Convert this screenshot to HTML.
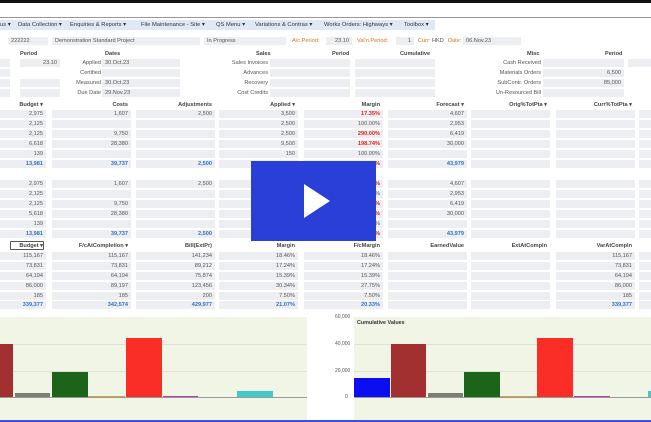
<!DOCTYPE html>
<html><head><meta charset="utf-8"><style>
*{margin:0;padding:0;box-sizing:border-box}
body{width:651px;height:422px;overflow:hidden;background:#fff;font-family:"Liberation Sans",sans-serif;font-size:5.6px;color:#555;position:relative}
.a{position:absolute;white-space:nowrap}
.b{position:absolute;background:#eceef1;height:8px;line-height:8px;padding:0 3px;white-space:nowrap}
.r{position:absolute;left:0;width:651px;height:8px}
.r>div{position:absolute;top:0;height:8px;line-height:8px;background:#eceef1;width:79px;text-align:right;padding-right:3px}
.r>div:nth-child(1){left:-33px}.r>div:nth-child(2){left:52px}.r>div:nth-child(3){left:136px}.r>div:nth-child(4){left:219px}.r>div:nth-child(5){left:304px}.r>div:nth-child(6){left:388px}.r>div:nth-child(7){left:471px}.r>div:nth-child(8){left:556px}.r>div:nth-child(9){left:639px}
.h>div{background:none;font-weight:bold;color:#444}
.t>div{color:#2f6fd0;font-weight:bold}
.red{color:#e02020!important;font-weight:bold}
.o{color:#e07020}
.nav{position:absolute;left:0;top:20px;width:435px;height:10px;background:#dfe9f5;line-height:10px;color:#333;font-size:5.8px}
.nav span{position:absolute}
.g{position:absolute;height:1px;background:#dfe3d6}
</style></head><body>
<div class="a" style="left:0;top:0;width:651px;height:3px;background:#111"></div>
<div class="a" style="left:0;top:17px;width:651px;height:1px;background:#999"></div>
<div class="nav"><span style="left:0">us ▾</span><span style="left:18px">Data Collection ▾</span><span style="left:70px">Enquiries &amp; Reports ▾</span><span style="left:141px">File Maintenance - Site ▾</span><span style="left:216px">QS Menu ▾</span><span style="left:255px">Variations &amp; Contras ▾</span><span style="left:324px">Works Orders: Highways ▾</span><span style="left:404px">Toolbox ▾</span></div>

<div class="b" style="left:8px;top:37px;width:40px">222222</div>
<div class="b" style="left:52px;top:37px;width:148px">Demonstration Standard Project</div>
<div class="b" style="left:204px;top:37px;width:82px">In Progress</div>
<div class="a o" style="left:292px;top:37px;line-height:8px">A/c.Period:</div>
<div class="b" style="left:326px;top:37px;width:26px;text-align:right">23.10</div>
<div class="a o" style="left:357px;top:37px;line-height:8px">Val'n.Period:</div>
<div class="b" style="left:396px;top:37px;width:18px;text-align:right">1</div>
<div class="a o" style="left:418px;top:37px;line-height:8px">Curr:</div>
<div class="a" style="left:432px;top:37px;line-height:8px">HKD</div>
<div class="a o" style="left:448px;top:37px;line-height:8px">Date:</div>
<div class="b" style="left:463px;top:37px;width:58px">06.Nov.23</div>

<div class="a" style="left:20px;top:51px;font-weight:bold;color:#444">Period</div>
<div class="a" style="left:105px;top:51px;font-weight:bold;color:#444">Dates</div>
<div class="a" style="left:256px;top:51px;font-weight:bold;color:#444">Sales</div>
<div class="a" style="left:332px;top:51px;font-weight:bold;color:#444">Period</div>
<div class="a" style="left:400px;top:51px;font-weight:bold;color:#444">Cumulative</div>
<div class="a" style="left:527px;top:51px;font-weight:bold;color:#444">Misc</div>
<div class="a" style="left:605px;top:51px;font-weight:bold;color:#444">Period</div>

<div class="b" style="left:0;top:59px;width:10px"></div><div class="b" style="left:0;top:69px;width:10px"></div><div class="b" style="left:0;top:79px;width:10px"></div><div class="b" style="left:0;top:89px;width:10px"></div>
<div class="b" style="left:20px;top:59px;width:40px;text-align:right">23.10</div>
<div class="b" style="left:20px;top:79px;width:40px"></div><div class="b" style="left:20px;top:89px;width:40px"></div>
<div class="a" style="left:60px;top:59px;width:41px;text-align:right;line-height:8px">Applied</div>
<div class="a" style="left:60px;top:69px;width:41px;text-align:right;line-height:8px">Certified</div>
<div class="a" style="left:60px;top:79px;width:41px;text-align:right;line-height:8px">Measured</div>
<div class="a" style="left:60px;top:89px;width:41px;text-align:right;line-height:8px">Due Date</div>
<div class="b" style="left:102px;top:59px;width:78px">30.Oct.23</div><div class="b" style="left:102px;top:69px;width:78px"></div><div class="b" style="left:102px;top:79px;width:78px">30.Oct.23</div><div class="b" style="left:102px;top:89px;width:78px">29.Nov.23</div>
<div class="a" style="left:200px;top:59px;width:68px;text-align:right;line-height:8px">Sales Invoices</div>
<div class="a" style="left:200px;top:69px;width:68px;text-align:right;line-height:8px">Advances</div>
<div class="a" style="left:200px;top:79px;width:68px;text-align:right;line-height:8px">Recovery</div>
<div class="a" style="left:200px;top:89px;width:68px;text-align:right;line-height:8px">Cost Credits</div>
<div class="b" style="left:270px;top:59px;width:80px"></div><div class="b" style="left:270px;top:69px;width:80px"></div><div class="b" style="left:270px;top:79px;width:80px"></div><div class="b" style="left:270px;top:89px;width:80px"></div>
<div class="b" style="left:355px;top:59px;width:80px"></div><div class="b" style="left:355px;top:69px;width:80px"></div><div class="b" style="left:355px;top:79px;width:80px"></div><div class="b" style="left:355px;top:89px;width:80px"></div>
<div class="a" style="left:470px;top:59px;width:71px;text-align:right;line-height:8px">Cash Received</div>
<div class="a" style="left:470px;top:69px;width:71px;text-align:right;line-height:8px">Materials Orders</div>
<div class="a" style="left:470px;top:79px;width:71px;text-align:right;line-height:8px">SubContr. Orders</div>
<div class="a" style="left:470px;top:89px;width:71px;text-align:right;line-height:8px">Un-Resourced Bill</div>
<div class="b" style="left:543px;top:59px;width:81px"></div><div class="b" style="left:543px;top:69px;width:81px;text-align:right">6,500</div><div class="b" style="left:543px;top:79px;width:81px;text-align:right">85,000</div><div class="b" style="left:543px;top:89px;width:81px"></div>
<div class="b" style="left:628px;top:59px;width:30px"></div>

<div class="r h" style="top:101px"><div>Budget ▾</div><div>Costs</div><div>Adjustments</div><div>Applied ▾</div><div>Margin</div><div>Forecast ▾</div><div>Orig%TotPta ▾</div><div>Curr%TotPta ▾</div></div>
<div class="r" style="top:110px"><div>2,975</div><div>1,607</div><div>2,500</div><div>3,500</div><div class="red">17.35%</div><div>4,607</div><div></div><div></div><div></div></div>
<div class="r" style="top:120px"><div>2,125</div><div></div><div></div><div>2,500</div><div>100.00%</div><div>2,953</div><div></div><div></div><div></div></div>
<div class="r" style="top:130px"><div>2,125</div><div>9,750</div><div></div><div>2,500</div><div class="red">290.00%</div><div>6,419</div><div></div><div></div><div></div></div>
<div class="r" style="top:140px"><div>6,618</div><div>28,380</div><div></div><div>9,500</div><div class="red">198.74%</div><div>30,000</div><div></div><div></div><div></div></div>
<div class="r" style="top:150px"><div>139</div><div></div><div></div><div>150</div><div>100.00%</div><div></div><div></div><div></div><div></div></div>
<div class="r t" style="top:160px"><div>13,981</div><div>39,737</div><div>2,500</div><div></div><div class="red">%</div><div>43,979</div><div></div><div></div><div></div></div>

<div class="r" style="top:180px"><div>2,975</div><div>1,607</div><div>2,500</div><div></div><div class="red">%</div><div>4,607</div><div></div><div></div><div></div></div>
<div class="r" style="top:190px"><div>2,125</div><div></div><div></div><div></div><div>%</div><div>2,953</div><div></div><div></div><div></div></div>
<div class="r" style="top:200px"><div>2,125</div><div>9,750</div><div></div><div></div><div class="red">%</div><div>6,419</div><div></div><div></div><div></div></div>
<div class="r" style="top:210px"><div>5,618</div><div>28,380</div><div></div><div></div><div class="red">%</div><div>30,000</div><div></div><div></div><div></div></div>
<div class="r" style="top:220px"><div>139</div><div></div><div></div><div></div><div>%</div><div></div><div></div><div></div><div></div></div>
<div class="r t" style="top:230px"><div>13,981</div><div>39,737</div><div>2,500</div><div></div><div class="red">%</div><div>43,979</div><div></div><div></div><div></div></div>

<div class="a" style="left:10px;top:241px;width:34px;height:9px;border:1px solid #555;border-radius:1px"></div>
<div class="r h" style="top:242px"><div>Budget ▾</div><div>F/cAtCompletion ▾</div><div>Bill(ExtPr)</div><div>Margin</div><div>F/cMargin</div><div>EarnedValue</div><div>ExtAtCompln</div><div>VarAtCompln</div></div>
<div class="r" style="top:252px"><div>115,167</div><div>115,167</div><div>141,234</div><div>18.46%</div><div>18.46%</div><div></div><div></div><div>115,167</div><div></div></div>
<div class="r" style="top:262px"><div>73,831</div><div>73,831</div><div>89,212</div><div>17.24%</div><div>17.24%</div><div></div><div></div><div>73,831</div><div></div></div>
<div class="r" style="top:272px"><div>64,194</div><div>64,194</div><div>75,874</div><div>15.39%</div><div>15.39%</div><div></div><div></div><div>64,194</div><div></div></div>
<div class="r" style="top:282px"><div>86,000</div><div>89,197</div><div>123,456</div><div>30.34%</div><div>27.75%</div><div></div><div></div><div>86,000</div><div></div></div>
<div class="r" style="top:292px"><div>185</div><div>185</div><div>200</div><div>7.50%</div><div>7.50%</div><div></div><div></div><div>185</div><div></div></div>
<div class="r t" style="top:301px"><div>339,377</div><div>342,574</div><div>429,977</div><div>21.07%</div><div>20.33%</div><div></div><div></div><div>339,377</div><div></div></div>

<div class="a" style="left:251px;top:161px;width:125px;height:80px;background:#2a3fd8"></div>
<div class="a" style="left:304px;top:184px;width:0;height:0;border-top:17px solid transparent;border-bottom:17px solid transparent;border-left:26px solid #fff"></div>

<div class="a" style="left:0;top:317px;width:307px;height:103px;background:#f1f5e6"></div>
<div class="g" style="left:0;top:344px;width:307px"></div><div class="g" style="left:0;top:371px;width:307px"></div>
<div class="a" style="left:0;top:397px;width:307px;height:1px;background:#999"></div>
<div class="a" style="left:0;top:344px;width:13px;height:53px;background:#a33030"></div>
<div class="a" style="left:15px;top:393px;width:35px;height:4px;background:#7a7f74"></div>
<div class="a" style="left:52px;top:372px;width:36px;height:25px;background:#1b6418"></div>
<div class="a" style="left:88px;top:396px;width:37px;height:1px;background:#d9a040"></div>
<div class="a" style="left:126px;top:338px;width:36px;height:59px;background:#fa2e26"></div>
<div class="a" style="left:163px;top:396px;width:35px;height:1px;background:#b040b0"></div>
<div class="a" style="left:237px;top:391px;width:36px;height:6px;background:#3fc9c9"></div>

<div class="a" style="left:335px;top:314px;font-size:5px">60,000</div>
<div class="a" style="left:335px;top:341px;font-size:5px">40,000</div>
<div class="a" style="left:335px;top:368px;font-size:5px">20,000</div>
<div class="a" style="left:345px;top:394px;font-size:5px">0</div>
<div class="a" style="left:354px;top:317px;width:297px;height:103px;background:#f1f5e6"></div>
<div class="a" style="left:357px;top:320px;font-weight:bold;color:#333;font-size:5.4px">Cumulative Values</div>
<div class="g" style="left:354px;top:344px;width:297px"></div><div class="g" style="left:354px;top:371px;width:297px"></div>
<div class="a" style="left:354px;top:397px;width:297px;height:1px;background:#999"></div>
<div class="a" style="left:354px;top:378px;width:36px;height:19px;background:#0b0ef0"></div>
<div class="a" style="left:391px;top:344px;width:35px;height:53px;background:#a33030"></div>
<div class="a" style="left:428px;top:393px;width:35px;height:4px;background:#7a7f74"></div>
<div class="a" style="left:464px;top:372px;width:36px;height:25px;background:#1b6418"></div>
<div class="a" style="left:500px;top:396px;width:37px;height:1px;background:#d9a040"></div>
<div class="a" style="left:537px;top:338px;width:36px;height:59px;background:#fa2e26"></div>
<div class="a" style="left:574px;top:396px;width:36px;height:1px;background:#b040b0"></div>
<div class="a" style="left:648px;top:391px;width:5px;height:6px;background:#3fc9c9"></div>

<div class="a" style="left:0;top:420px;width:651px;height:2px;background:#3a4fe0"></div>
</body></html>
